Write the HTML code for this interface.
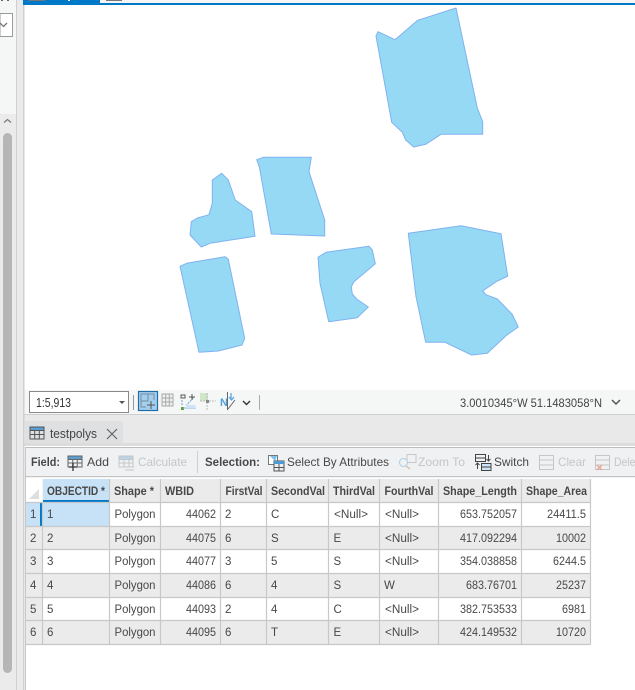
<!DOCTYPE html>
<html><head><meta charset="utf-8"><style>
html,body{margin:0;padding:0;background:#fff;width:635px;height:690px;overflow:hidden}
svg{display:block}
text{font-family:"Liberation Sans",sans-serif;font-size:11.5px;fill:#484848}
.h{font-weight:bold;fill:#484848;font-size:11.5px}
.t{font-size:12px}
.d{fill:#c4c6c8;font-size:12px}
.p{fill:#96d9f4;stroke:#80b2f0;stroke-width:1;stroke-linejoin:round}
</style></head><body>
<svg width="635" height="690" viewBox="0 0 635 690" xmlns="http://www.w3.org/2000/svg">
<rect width="635" height="690" fill="#fff"/>
<!-- left -->
<rect x="0" y="0" width="16" height="690" fill="#f5f6f6"/>
<rect x="0" y="114" width="16" height="576" fill="#ebebeb"/>
<rect x="16" y="0" width="1" height="690" fill="#d0d0d4"/>
<rect x="17" y="0" width="6" height="690" fill="#eaeaea"/>
<rect x="23" y="0" width="1.5" height="690" fill="#cfcfcf"/>
<rect x="0" y="13.5" width="12.5" height="23" fill="#fff" stroke="#9a9a9a" stroke-width="1"/>
<path d="M0 23l3.5 3.5L7 23" fill="none" stroke="#777" stroke-width="1.3"/>
<path d="M4 122.5l3.5-3 3.500 3" fill="none" stroke="#777" stroke-width="1.2"/>
<rect x="3" y="133" width="9" height="540" rx="4.5" fill="#b6b6b6"/>
<rect x="1" y="0" width="2" height="1" fill="#666"/><rect x="7" y="0" width="2" height="1" fill="#666"/>
<!-- top tabs -->
<rect x="23" y="0" width="77" height="5" fill="#0078c8"/>
<rect x="100" y="0" width="535" height="3" fill="#f6f6f6"/>
<rect x="100" y="3" width="535" height="2" fill="#0078c8"/>
<rect x="29" y="0" width="16" height="1" fill="#777"/>
<rect x="106" y="0" width="16" height="1" fill="#777"/>
<rect x="68" y="0" width="2" height="1" fill="#fff"/>
<!-- map polygons -->
<polygon class="p" points="456,8 477.3,108 482.7,121.7 482.7,134.3 441,134.3 425.7,144.3 413.7,147 405.7,140 402.3,132.3 391.7,122.3 376,36 378,31.7 395,39.7 417.7,20.3"/>
<polygon class="p" points="256.7,159.7 263.3,157.3 311.3,157.3 309,171.7 324.7,220 324.7,236 271.3,234 259.3,166.7"/>
<polygon class="p" points="212.3,180 221.7,173.3 228.3,180 235.3,200 251.7,211.7 255,236.3 210,243.3 201.3,247 190,235 191.3,221.7 197.3,218 209,214.7 212.3,203.3"/>
<polygon class="p" points="180,266.3 186.7,263.3 225,256.7 228.3,259.3 244.7,338.3 242,345 218.3,351 199,352.3"/>
<polygon class="p" points="318,257.3 326,252.3 369,246.3 372.3,250 375.3,263.7 354,281.7 351.3,286.7 352.3,294 356.7,299 368.3,307 357.3,317.7 328.7,321.7 320,283.3"/>
<polygon class="p" points="408.3,233.3 461,225.7 501,233.7 507.7,276.3 497.3,281 482.7,291 486,294.7 497.3,299 512,314 518.3,327 506,335.7 487.3,353.3 471.7,355 445,342.3 425.7,342.3 416,296.7"/>
<!-- status bar -->
<rect x="24.5" y="390" width="611" height="24" fill="#f5f6f6"/>
<rect x="24.5" y="414" width="611" height="1" fill="#cfcfcf"/>
<rect x="29.5" y="391.5" width="99" height="21" fill="#fff" stroke="#8a8a8a"/>
<text x="36" y="407" textLength="35" lengthAdjust="spacingAndGlyphs" style="fill:#333;font-size:13px">1:5,913</text>
<path d="M119 401h6l-3 3z" fill="#555"/>
<rect x="133" y="395" width="1" height="15" fill="#999"/>
<!-- selected tool -->
<rect x="138.5" y="391.5" width="19" height="19" fill="#a3cfef" stroke="#1f6fa8" stroke-width="1.2"/>
<path d="M141 394h7v7h-7zM148 394h6v6M141 401v6h5" fill="none" stroke="#7a8a99" stroke-width="1"/>
<path d="M151 401v8M147 405h8" stroke="#555" stroke-width="1"/>
<!-- grid tool -->
<path d="M162 394h11v12h-11zM162 398h11M162 402h11M165.7 394v12M169.3 394v12" fill="#f0f0f0" stroke="#a8a8a8" stroke-width="1"/>
<!-- snapping tool -->
<rect x="181" y="395" width="4" height="3" fill="none" stroke="#555"/>
<rect x="181" y="407" width="3" height="3" fill="#5fa040"/>
<path d="M182 400v6M186 406l8-9" stroke="#6aa8d8" stroke-dasharray="2 1" fill="none"/>
<path d="M192 394v6M189 397h6" stroke="#555"/>
<path d="M183 408h13" stroke="#88b8e0"/><path d="M186 405h9l1 3h-10z" fill="#cfe4f5"/>
<!-- grid line tool -->
<rect x="200" y="393" width="8" height="8" fill="#cfe6c8"/>
<path d="M207 393v18M200 401h16" stroke="#b9b9b9" stroke-dasharray="2 1" fill="none"/>
<rect x="206" y="400" width="3" height="3" fill="#888"/>
<!-- north tool -->
<text x="220" y="406" style="font-size:11px;font-weight:bold;fill:#4da0dc">N</text>
<path d="M227.5 392v18M228 409l7-9" stroke="#666" fill="none"/>
<path d="M231 393v6M229 397l2.5 3 2.500-3" stroke="#4da0dc" fill="none" stroke-width="1.2"/>
<path d="M243 401l3.5 3.5 3.500-3.500" fill="none" stroke="#333" stroke-width="1.4"/>
<rect x="259" y="395" width="1" height="15" fill="#aaa"/>
<text x="460" y="407" textLength="142" lengthAdjust="spacingAndGlyphs" style="fill:#444;font-size:12px">3.0010345°W 51.1483058°N</text>
<path d="M612 400l4 4 4-4" fill="none" stroke="#555" stroke-width="1.5"/>
<!-- tab band -->
<rect x="24.5" y="415" width="611" height="28" fill="#e9e9e9"/>
<path d="M24 443v-19q0-3 3-3h93q3 0 3 3v19z" fill="#dfe0e2"/>
<rect x="30" y="427" width="14" height="3" fill="#5a9fd4"/>
<path d="M30 427h14v12h-14zM30 430.5h14M30 434.5h14M34.7 430v9M39.300 430v9" fill="none" stroke="#555" stroke-width="1"/>
<text x="50" y="438" textLength="47" lengthAdjust="spacingAndGlyphs" style="font-size:13px;fill:#444">testpolys</text>
<path d="M107 429l10 10M117 429l-10 10" stroke="#666" stroke-width="1.2"/>
<rect x="24.5" y="443" width="611" height="3" fill="#dcdcdc"/>
<rect x="25" y="447" width="610" height="1" fill="#bdbdbd"/>
<rect x="25" y="448" width="1" height="242" fill="#c8c8c8"/>
<!-- toolbar -->
<rect x="26" y="448" width="609" height="28" fill="#eff1f2"/>
<rect x="25" y="476" width="610" height="1.2" fill="#c4c4c4"/>
<text class="h" x="31" y="466" textLength="29" lengthAdjust="spacingAndGlyphs">Field:</text>
<rect x="68" y="456" width="14" height="3" fill="#5a9fd4"/>
<path d="M68 456h14v11h-14zM68 459.5h14M68 463h14M72.7 459v8M77.300 459v8" fill="none" stroke="#666"/>
<path d="M73 463v8M69 467h8" stroke="#333" stroke-width="1.3"/>
<text class="t" x="87" y="466" textLength="22" lengthAdjust="spacingAndGlyphs">Add</text>
<rect x="119" y="456" width="14" height="3" fill="#b8d4e6"/>
<path d="M119 456h14v11h-14zM119 459.5h14M119 463h14M124 459v8M129 459v8" fill="none" stroke="#c4c6c8"/>
<path d="M125 470h9M125 467h9" stroke="#c4c6c8"/>
<text class="d" x="138" y="466" textLength="49" lengthAdjust="spacingAndGlyphs">Calculate</text>
<rect x="197" y="451" width="1" height="22" fill="#cfcfcf"/>
<text class="h" x="205" y="466" textLength="55" lengthAdjust="spacingAndGlyphs">Selection:</text>
<rect x="268.5" y="455.5" width="9" height="9" fill="#fff" stroke="#777"/>
<path d="M270 456l5 5 2-5z" fill="#7cc2ea"/>
<rect x="274" y="461" width="10" height="10" fill="#eee" stroke="#555"/>
<rect x="274" y="461" width="10" height="3" fill="#4d9ad4"/>
<path d="M274 467.5h10M279 464v7" stroke="#555"/>
<text class="t" x="287" y="466" textLength="102" lengthAdjust="spacingAndGlyphs">Select By Attributes</text>
<rect x="407" y="454.5" width="9" height="8" fill="none" stroke="#c4c6c8"/>
<circle cx="403.5" cy="462.5" r="4" fill="#eff1f2" stroke="#a8cfe8"/>
<path d="M406 466l4 3" stroke="#dcc8b0" stroke-width="1.5"/>
<text class="d" x="418" y="466" textLength="47" lengthAdjust="spacingAndGlyphs">Zoom To</text>
<path d="M475.5 454.5h10v7h-10zM475.5 458h10" fill="none" stroke="#444"/>
<path d="M488.500 455v6M486.500 459l2 2 2-2M477.500 463v6M475.500 465l2-2 2 2" stroke="#444" fill="none"/>
<path d="M481.500 463.500h9.500v7h-9.500zM481.500 467h9.500" fill="#cfe4f5" stroke="#444"/>
<text class="t" x="494" y="466" textLength="35" lengthAdjust="spacingAndGlyphs">Switch</text>
<path d="M539.5 455.5h14v14h-14zM539.5 460h14M539.5 465h14" fill="none" stroke="#c4c6c8"/>
<text class="d" x="558" y="466" textLength="28" lengthAdjust="spacingAndGlyphs">Clear</text>
<path d="M595.5 455.5h14v14h-14zM595.5 460h14M595.5 465h14" fill="none" stroke="#c4c6c8"/>
<path d="M597 465l5 5M602 465l-5 5" stroke="#e8a898" stroke-width="1.5"/>
<text class="d" x="614" y="466" textLength="30" lengthAdjust="spacingAndGlyphs">Delete</text>
<!-- table backgrounds -->
<rect x="26" y="478.5" width="16.5" height="24" fill="#fff"/>
<path d="M29 499l10-10v10z" fill="#dedede"/>
<rect x="42.5" y="479" width="548" height="23.5" fill="#ebebeb"/>
<rect x="43" y="479" width="66" height="23.5" fill="#c7e2f6"/>
<rect x="43" y="500" width="66" height="2" fill="#0078c8"/>
<rect x="26" y="502.5" width="16.5" height="142" fill="#ebebeb"/>
<rect x="26" y="503" width="16.5" height="23" fill="#c7e2f6"/>
<rect x="40" y="503" width="2" height="23" fill="#0078c8"/>
<rect x="43" y="503" width="66" height="23" fill="#c7e2f6"/>
<rect x="42.5" y="526.5" width="548" height="23" fill="#ebebeb"/>
<rect x="42.5" y="573.5" width="548" height="24" fill="#ebebeb"/>
<rect x="42.5" y="620.5" width="548" height="24" fill="#ebebeb"/>
<!-- grid -->
<g stroke="#c8c8c8" stroke-width="1.2" fill="none">
<path d="M26 502.5H590.5M26 526.5H590.5M26 549.5H590.5M26 573.5H590.5M26 597.5H590.5M26 620.5H590.5M26 644.5H590.5"/>
<path d="M42.5 502V644.5M109.5 479V644.5M160.5 479V644.5M220.5 479V644.5M266.5 479V644.5M328.5 479V644.5M379.5 479V644.5M438.5 479V644.5M521.5 479V644.5M590.5 479V644.5"/>
</g>
<!-- headers -->
<g>
<text class="h" x="47" y="495" textLength="58" lengthAdjust="spacingAndGlyphs">OBJECTID *</text>
<text class="h" x="114" y="495" textLength="40" lengthAdjust="spacingAndGlyphs">Shape *</text>
<text class="h" x="165" y="495" textLength="29" lengthAdjust="spacingAndGlyphs">WBID</text>
<text class="h" x="225.5" y="495" textLength="37" lengthAdjust="spacingAndGlyphs">FirstVal</text>
<text class="h" x="271" y="495" textLength="54" lengthAdjust="spacingAndGlyphs">SecondVal</text>
<text class="h" x="333" y="495" textLength="42" lengthAdjust="spacingAndGlyphs">ThirdVal</text>
<text class="h" x="384.5" y="495" textLength="49" lengthAdjust="spacingAndGlyphs">FourthVal</text>
<text class="h" x="443" y="495" textLength="74" lengthAdjust="spacingAndGlyphs">Shape_Length</text>
<text class="h" x="526" y="495" textLength="61" lengthAdjust="spacingAndGlyphs">Shape_Area</text>
</g>
<!-- rows -->
<g>
<text x="30" y="518">1</text><text x="47" y="518">1</text><text x="114.5" y="518" textLength="41" lengthAdjust="spacingAndGlyphs">Polygon</text><text x="186" y="518" textLength="30" lengthAdjust="spacingAndGlyphs">44062</text><text x="225" y="518">2</text><text x="271" y="518">C</text><text x="334" y="518" textLength="34" lengthAdjust="spacingAndGlyphs">&lt;Null&gt;</text><text x="385" y="518" textLength="34" lengthAdjust="spacingAndGlyphs">&lt;Null&gt;</text><text x="460" y="518" textLength="57" lengthAdjust="spacingAndGlyphs">653.752057</text><text x="547" y="518" textLength="39" lengthAdjust="spacingAndGlyphs">24411.5</text>
<text x="30" y="542">2</text><text x="47" y="542">2</text><text x="114.5" y="542" textLength="41" lengthAdjust="spacingAndGlyphs">Polygon</text><text x="186" y="542" textLength="30" lengthAdjust="spacingAndGlyphs">44075</text><text x="225" y="542">6</text><text x="271" y="542">S</text><text x="333.5" y="542">E</text><text x="385" y="542" textLength="34" lengthAdjust="spacingAndGlyphs">&lt;Null&gt;</text><text x="460" y="542" textLength="57" lengthAdjust="spacingAndGlyphs">417.092294</text><text x="556" y="542" textLength="30" lengthAdjust="spacingAndGlyphs">10002</text>
<text x="30" y="565">3</text><text x="47" y="565">3</text><text x="114.5" y="565" textLength="41" lengthAdjust="spacingAndGlyphs">Polygon</text><text x="186" y="565" textLength="30" lengthAdjust="spacingAndGlyphs">44077</text><text x="225" y="565">3</text><text x="271" y="565">5</text><text x="333.5" y="565">S</text><text x="385" y="565" textLength="34" lengthAdjust="spacingAndGlyphs">&lt;Null&gt;</text><text x="460" y="565" textLength="57" lengthAdjust="spacingAndGlyphs">354.038858</text><text x="553" y="565" textLength="33" lengthAdjust="spacingAndGlyphs">6244.5</text>
<text x="30" y="589">4</text><text x="47" y="589">4</text><text x="114.5" y="589" textLength="41" lengthAdjust="spacingAndGlyphs">Polygon</text><text x="186" y="589" textLength="30" lengthAdjust="spacingAndGlyphs">44086</text><text x="225" y="589">6</text><text x="271" y="589">4</text><text x="333.5" y="589">S</text><text x="384" y="589">W</text><text x="466" y="589" textLength="51" lengthAdjust="spacingAndGlyphs">683.76701</text><text x="556" y="589" textLength="30" lengthAdjust="spacingAndGlyphs">25237</text>
<text x="30" y="613">5</text><text x="47" y="613">5</text><text x="114.5" y="613" textLength="41" lengthAdjust="spacingAndGlyphs">Polygon</text><text x="186" y="613" textLength="30" lengthAdjust="spacingAndGlyphs">44093</text><text x="225" y="613">2</text><text x="271" y="613">4</text><text x="333.5" y="613">C</text><text x="385" y="613" textLength="34" lengthAdjust="spacingAndGlyphs">&lt;Null&gt;</text><text x="460" y="613" textLength="57" lengthAdjust="spacingAndGlyphs">382.753533</text><text x="562" y="613" textLength="24" lengthAdjust="spacingAndGlyphs">6981</text>
<text x="30" y="636">6</text><text x="47" y="636">6</text><text x="114.5" y="636" textLength="41" lengthAdjust="spacingAndGlyphs">Polygon</text><text x="186" y="636" textLength="30" lengthAdjust="spacingAndGlyphs">44095</text><text x="225" y="636">6</text><text x="271" y="636">T</text><text x="333.5" y="636">E</text><text x="385" y="636" textLength="34" lengthAdjust="spacingAndGlyphs">&lt;Null&gt;</text><text x="460" y="636" textLength="57" lengthAdjust="spacingAndGlyphs">424.149532</text><text x="556" y="636" textLength="30" lengthAdjust="spacingAndGlyphs">10720</text>
</g>
</svg>
</body></html>
